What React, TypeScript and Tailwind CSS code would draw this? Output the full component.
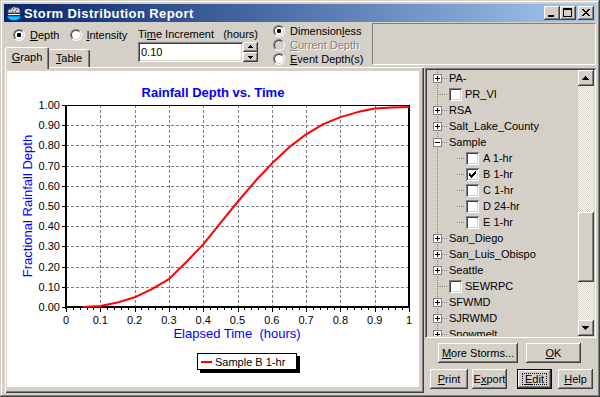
import React from "react";

const RAISED =
  "shadow-[inset_-1px_-1px_#404040,inset_1px_1px_#ffffff,inset_-2px_-2px_#808080,inset_2px_2px_#d4d0c8]";
const SUNKEN =
  "shadow-[inset_1px_1px_#808080,inset_-1px_-1px_#ffffff,inset_2px_2px_#404040,inset_-2px_-2px_#d4d0c8]";
const DITHER =
  "bg-[repeating-conic-gradient(#ffffff_0%_25%,#d4d0c8_0%_50%)] bg-size-[2px_2px]";

type Px = [number, number, number, number];

function Pixels({ w, h, px, color = "#000", className = "" }: { w: number; h: number; px: Px[]; color?: string; className?: string }) {
  return (
    <svg width={w} height={h} viewBox={`0 0 ${w} ${h}`} className={className} shapeRendering="crispEdges">
      {px.map(([x, y, pw, ph], i) => (
        <rect key={i} x={x} y={y} width={pw} height={ph} fill={color} />
      ))}
    </svg>
  );
}

function StormIcon() {
  return (
    <svg width="16" height="16" viewBox="0 0 16 16" className="shrink-0">
      <path d="M2 8 Q1 4 5 3.5 Q7 0.5 10.5 2.5 Q14.5 2.5 14 6.5 Q15 8 13 8 Z" fill="#c8c8c8" stroke="#404040" strokeWidth="0.8" />
      <rect x="4" y="4" width="1" height="1" fill="#404040" />
      <rect x="7" y="3" width="1" height="1" fill="#404040" />
      <rect x="10" y="4" width="1" height="1" fill="#404040" />
      <rect x="6" y="6" width="1" height="1" fill="#404040" />
      <rect x="9" y="6" width="1" height="1" fill="#404040" />
      <rect x="2" y="9" width="12" height="1" fill="#ffffff" />
      <rect x="2" y="10" width="12" height="1" fill="#0030c0" />
      <path d="M1 11 H15 Q14 15.5 8 15.5 Q2 15.5 1 11 Z" fill="#10c8ff" stroke="#0040b0" strokeWidth="0.8" />
    </svg>
  );
}

function CapBtn({ kind }: { kind: "min" | "max" | "close" }) {
  let px: Px[] = [];
  if (kind === "min") px = [[4, 9, 6, 2]];
  if (kind === "max")
    px = [
      [3, 2, 9, 2],
      [3, 2, 1, 9],
      [11, 2, 1, 9],
      [3, 10, 9, 1],
    ];
  if (kind === "close")
    px = [
      [4, 3, 2, 1], [10, 3, 2, 1],
      [5, 4, 2, 1], [9, 4, 2, 1],
      [6, 5, 4, 1],
      [7, 6, 2, 1],
      [6, 7, 4, 1],
      [5, 8, 2, 1], [9, 8, 2, 1],
      [4, 9, 2, 1], [10, 9, 2, 1],
    ];
  return (
    <div className={`w-[16px] h-[14px] bg-[#d4d0c8] ${RAISED}`}>
      <Pixels w={16} h={14} px={px} />
    </div>
  );
}

function Radio({ checked, disabled }: { checked?: boolean; disabled?: boolean }) {
  return (
    <span className="relative inline-block w-[12px] h-[12px] shrink-0 rounded-full border border-t-[#808080] border-l-[#808080] border-r-white border-b-white">
      <span
        className={`absolute inset-0 rounded-full border border-t-[#404040] border-l-[#404040] border-r-[#d4d0c8] border-b-[#d4d0c8] ${
          disabled ? "bg-[#d4d0c8]" : "bg-white"
        }`}
      />
      {checked && <span className="absolute left-[3px] top-[3px] w-[4px] h-[4px] rounded-[1px] bg-black" />}
    </span>
  );
}

const CHECK: Px[] = [
  [6, 0, 1, 1],
  [5, 1, 2, 1],
  [0, 2, 1, 1], [4, 2, 3, 1],
  [0, 3, 2, 1], [3, 3, 3, 1],
  [0, 4, 5, 1],
  [1, 5, 3, 1],
  [2, 6, 1, 1],
];

function Check({ checked }: { checked?: boolean }) {
  return (
    <span className={`relative inline-block w-[13px] h-[13px] shrink-0 bg-white ${SUNKEN}`}>
      {checked && <Pixels w={7} h={7} px={CHECK} className="absolute left-[3px] top-[3px]" />}
    </span>
  );
}

type Row = { label: string; kind: "exp" | "chk"; level: 0 | 1; open?: boolean; checked?: boolean };
const ROWS: Row[] = [
  { label: "PA-", kind: "exp", level: 0 },
  { label: "PR_VI", kind: "chk", level: 0 },
  { label: "RSA", kind: "exp", level: 0 },
  { label: "Salt_Lake_County", kind: "exp", level: 0 },
  { label: "Sample", kind: "exp", level: 0, open: true },
  { label: "A 1-hr", kind: "chk", level: 1 },
  { label: "B 1-hr", kind: "chk", level: 1, checked: true },
  { label: "C 1-hr", kind: "chk", level: 1 },
  { label: "D 24-hr", kind: "chk", level: 1 },
  { label: "E 1-hr", kind: "chk", level: 1 },
  { label: "San_Diego", kind: "exp", level: 0 },
  { label: "San_Luis_Obispo", kind: "exp", level: 0 },
  { label: "Seattle", kind: "exp", level: 0 },
  { label: "SEWRPC", kind: "chk", level: 0 },
  { label: "SFWMD", kind: "exp", level: 0 },
  { label: "SJRWMD", kind: "exp", level: 0 },
  { label: "Snowmelt", kind: "exp", level: 0 },
];

function Gutter({ row }: { row: Row }) {
  const w = row.level === 1 ? 39 : 22;
  const hx0 = row.level === 1 ? 30 : row.kind === "exp" ? 15 : 11;
  return (
    <svg width={w} height={16} className="shrink-0" shapeRendering="crispEdges">
      <line x1={10.5} y1={0} x2={10.5} y2={16} stroke="#808080" strokeDasharray="1 1" />
      <line x1={hx0} y1={8.5} x2={w - 1} y2={8.5} stroke="#808080" strokeDasharray="1 1" />
      {row.kind === "exp" && (
        <>
          <rect x={6.5} y={4.5} width={8} height={8} fill="#ffffff" stroke="#808080" />
          <line x1={8} y1={8.5} x2={13} y2={8.5} stroke="#000" />
          {!row.open && <line x1={10.5} y1={6} x2={10.5} y2={11} stroke="#000" />}
        </>
      )}
    </svg>
  );
}

function ScrollBtn({ dir }: { dir: "up" | "down" }) {
  const up: Px[] = [
    [7, 6, 1, 1],
    [6, 7, 3, 1],
    [5, 8, 5, 1],
    [4, 9, 7, 1],
  ];
  const down: Px[] = [
    [4, 6, 7, 1],
    [5, 7, 5, 1],
    [6, 8, 3, 1],
    [7, 9, 1, 1],
  ];
  return (
    <div className={`w-[16px] h-[16px] shrink-0 bg-[#d4d0c8] ${RAISED}`}>
      <Pixels w={16} h={16} px={dir === "up" ? up : down} />
    </div>
  );
}

function SpinBtn({ dir }: { dir: "up" | "down" }) {
  const up: Px[] = [
    [7, 3, 1, 1],
    [6, 4, 3, 1],
    [5, 5, 5, 1],
  ];
  const down: Px[] = [
    [5, 4, 5, 1],
    [6, 5, 3, 1],
    [7, 6, 1, 1],
  ];
  return (
    <div className={`w-[15px] h-[10px] bg-[#d4d0c8] ${RAISED}`}>
      <Pixels w={15} h={10} px={dir === "up" ? up : down} />
    </div>
  );
}

const DATA: [number, number][] = [
  [0.05, 0.0], [0.1, 0.005], [0.15, 0.022], [0.2, 0.048], [0.25, 0.088], [0.3, 0.138],
  [0.35, 0.222], [0.4, 0.31], [0.45, 0.415], [0.5, 0.52], [0.55, 0.62], [0.6, 0.71],
  [0.65, 0.79], [0.7, 0.855], [0.75, 0.905], [0.8, 0.94], [0.85, 0.965], [0.9, 0.982],
  [0.95, 0.988], [1.0, 0.99],
];

function Chart() {
  const X0 = 66, X1 = 409, Y0 = 307, Y1 = 105;
  const sx = (t: number) => X0 + (X1 - X0) * t;
  const sy = (d: number) => Y0 - (Y0 - Y1) * d;
  const ks = [1, 2, 3, 4, 5, 6, 7, 8, 9];
  const all = [0, 1, 2, 3, 4, 5, 6, 7, 8, 9, 10];
  const minor = Array.from({ length: 51 }, (_, i) => i);
  const font = "'Liberation Sans', Arial, sans-serif";
  return (
    <svg width={412} height={316} viewBox="7 71 412 316" className="block" fontFamily={font}>
      <text x={213} y={97} textAnchor="middle" fontSize={13} fontWeight="bold" fill="#0000ff">
        Rainfall Depth vs. Time
      </text>
      <g stroke="#808080" strokeWidth={1} strokeDasharray="3 2" shapeRendering="crispEdges">
        {ks.map((k) => {
          const x = Math.round(sx(k / 10)) + 0.5;
          return <line key={"v" + k} x1={x} y1={Y1} x2={x} y2={Y0} />;
        })}
        {ks.map((k) => {
          const y = Math.round(sy(k / 10)) + 0.5;
          return <line key={"h" + k} x1={X0} y1={y} x2={X1} y2={y} />;
        })}
      </g>
      <g shapeRendering="crispEdges">
        <line x1={X0} y1={105.5} x2={X1} y2={105.5} stroke="#000" />
        <rect x={408} y={105} width={2} height={203} fill="#000" />
        <rect x={65} y={105} width={2} height={204} fill="#000" />
        <rect x={65} y={306} width={345} height={2} fill="#000" />
        {all.map((k) => {
          const y = Math.round(sy(k / 10)) + 0.5;
          return <line key={"lt" + k} x1={62} y1={y} x2={65} y2={y} stroke="#000" />;
        })}
        {minor.map((i) => {
          const x = Math.round(sx(i / 50)) + 0.5;
          return <line key={"bt" + i} x1={x} y1={308} x2={x} y2={i % 5 === 0 ? 312 : 310} stroke="#000" />;
        })}
      </g>
      <polyline
        points={DATA.map(([t, d]) => `${sx(t).toFixed(1)},${sy(d).toFixed(1)}`).join(" ")}
        fill="none"
        stroke="#ff0000"
        strokeWidth={2}
        strokeLinejoin="round"
      />
      {all.map((k) => (
        <text key={"yl" + k} x={60} y={Math.round(sy(k / 10)) + 4} textAnchor="end" fontSize={11} fill="#000">
          {(k / 10).toFixed(2)}
        </text>
      ))}
      {all.map((k) => (
        <text key={"xl" + k} x={sx(k / 10)} y={324} textAnchor="middle" fontSize={11} fill="#000">
          {k === 0 ? "0" : k === 10 ? "1" : (k / 10).toFixed(1)}
        </text>
      ))}
      <text transform="translate(32,206) rotate(-90)" textAnchor="middle" fontSize={13} fill="#0000ff">
        Fractional Rainfall Depth
      </text>
      <text x={237} y={338} textAnchor="middle" fontSize={13} fill="#0000ff">
        {"Elapsed Time\u00a0 (hours)"}
      </text>
      <g shapeRendering="crispEdges">
        <rect x={200} y={356} width={100} height={17} fill="#000" />
        <rect x={197.5} y={353.5} width={99} height={16} fill="#ffffff" stroke="#000" />
        <rect x={201} y={361} width={11} height={2} fill="#ff0000" />
      </g>
      <text x={215} y={366} fontSize={11} fill="#000">
        Sample B 1-hr
      </text>
    </svg>
  );
}

function Btn({ children, className }: { children: React.ReactNode; className: string }) {
  return (
    <div className={`h-[20px] flex items-center justify-center bg-[#d4d0c8] ${RAISED} ${className}`}>
      <span>{children}</span>
    </div>
  );
}

export default function App() {
  return (
    <div className="w-[600px] h-[397px] bg-[#d4d0c8] p-[4px] flex flex-col font-['Liberation_Sans',Arial,sans-serif] text-[11px] text-black leading-none select-none overflow-hidden shadow-[inset_-1px_-1px_#404040,inset_1px_1px_#d4d0c8,inset_-2px_-2px_#808080,inset_2px_2px_#ffffff]">
      {/* Title bar */}
      <div className="h-[18px] shrink-0 flex items-center bg-linear-to-r from-[#0a246a] to-[#a6caf0] px-[2px]">
        <StormIcon />
        <span className="ml-[2px] text-white font-bold text-[13px] tracking-[0.4px] whitespace-nowrap">
          Storm Distribution Report
        </span>
        <div className="ml-auto flex items-center">
          <CapBtn kind="min" />
          <CapBtn kind="max" />
          <div className="w-[2px]" />
          <CapBtn kind="close" />
        </div>
      </div>

      {/* Top controls */}
      <div className="h-[45px] shrink-0 flex">
        <div className="w-[130px] flex flex-col">
          <div className="mt-[7px] h-[12px] flex items-center pl-[9px] whitespace-nowrap">
            <Radio checked />
            <span className="ml-[5px]">
              <u>D</u>epth
            </span>
            <span className="ml-[11px] flex">
              <Radio />
            </span>
            <span className="ml-[4px]">
              <u>I</u>ntensity
            </span>
          </div>
          <div className="mt-auto flex items-end pl-[1px]">
            <div className="relative z-10 w-[44px] h-[22px] -mb-[2px] bg-[#d4d0c8] rounded-t-[3px] border-t border-l border-white border-r border-r-[#404040] shadow-[inset_-1px_0_#808080] flex justify-center pt-[4px]">
              <span>
                <u>G</u>raph
              </span>
            </div>
            <div className="w-[41px] h-[18px] bg-[#d4d0c8] rounded-t-[3px] border-t border-white border-r border-r-[#404040] shadow-[inset_-1px_0_#808080] flex justify-center pt-[3px]">
              <span>
                <u>T</u>able
              </span>
            </div>
          </div>
        </div>

        <div className="ml-[4px] w-[122px] flex flex-col">
          <div className="mt-[5px] h-[14px] flex items-center justify-between pr-[2px] whitespace-nowrap">
            <span>
              Ti<u>m</u>e Increment
            </span>
            <span>(hours)</span>
          </div>
          <div className="mt-[1px] flex">
            <div className={`w-[105px] h-[20px] bg-white ${SUNKEN} flex items-center pl-[3px]`}>
              <span>0.10</span>
            </div>
            <div className="flex flex-col">
              <SpinBtn dir="up" />
              <SpinBtn dir="down" />
            </div>
          </div>
        </div>

        <div className="ml-[13px] w-[99px] flex flex-col mt-[2px] whitespace-nowrap">
          <div className="h-[14px] flex items-center">
            <Radio checked />
            <span className="ml-[5px]">
              Dimension<u>l</u>ess
            </span>
          </div>
          <div className="h-[14px] flex items-center">
            <Radio disabled />
            <span className="ml-[5px] text-[#808080] [text-shadow:1px_1px_#ffffff]">
              <u>C</u>urrent Depth
            </span>
          </div>
          <div className="h-[14px] flex items-center">
            <Radio />
            <span className="ml-[5px]">
              <u>E</u>vent Depth(s)
            </span>
          </div>
        </div>

        <div className="mt-[1px] w-[224px] h-[42px] border-t border-l border-[#808080] border-r border-b border-r-white border-b-white" />
      </div>

      {/* Main */}
      <div className="flex-1 flex min-h-0">
        <div className="ml-[1px] w-[419px] h-full shadow-[inset_1px_1px_#ffffff,inset_-1px_-1px_#404040,inset_-2px_-2px_#808080] pl-[2px] pt-[4px]">
          <div className="w-[412px] h-[316px] bg-white">
            <Chart />
          </div>
        </div>

        <div className="ml-[1px] w-[171px] flex flex-col">
          <div className={`mt-[1px] h-[270px] bg-[#d4d0c8] ${SUNKEN} p-[2px] flex`}>
            <div className="flex-1 overflow-hidden">
              {ROWS.map((r) => (
                <div key={r.label} className="h-[16px] flex items-center whitespace-nowrap">
                  <Gutter row={r} />
                  {r.kind === "chk" && <Check checked={r.checked} />}
                  <span className={r.kind === "chk" ? (r.level === 1 ? "ml-[4px]" : "ml-[3px]") : ""}>{r.label}</span>
                </div>
              ))}
            </div>
            <div className="w-[16px] flex flex-col">
              <ScrollBtn dir="up" />
              <div className={`h-[126px] ${DITHER}`} />
              <div className={`h-[70px] shrink-0 bg-[#d4d0c8] ${RAISED}`} />
              <div className={`flex-1 ${DITHER}`} />
              <ScrollBtn dir="down" />
            </div>
          </div>

          <div className="mt-[5px] flex">
            <Btn className="ml-[13px] w-[80px]">
              <u>M</u>ore Storms...
            </Btn>
            <Btn className="ml-[8px] w-[55px]">
              <u>O</u>K
            </Btn>
          </div>
          <div className="mt-[6px] flex">
            <Btn className="ml-[5px] w-[38px]">
              <u>P</u>rint
            </Btn>
            <Btn className="ml-[4px] w-[35px]">
              E<u>x</u>port
            </Btn>
            <div className="ml-[10px] w-[35px] h-[20px] border border-black">
              <div className={`relative w-full h-full bg-[#d4d0c8] ${RAISED} flex items-center justify-center`}>
                <div className="absolute left-[4px] right-[4px] top-[3px] bottom-[3px] border border-dotted border-black" />
                <span>
                  <u>E</u>dit
                </span>
              </div>
            </div>
            <Btn className="ml-[6px] w-[35px]">
              <u>H</u>elp
            </Btn>
          </div>
        </div>
      </div>
    </div>
  );
}
